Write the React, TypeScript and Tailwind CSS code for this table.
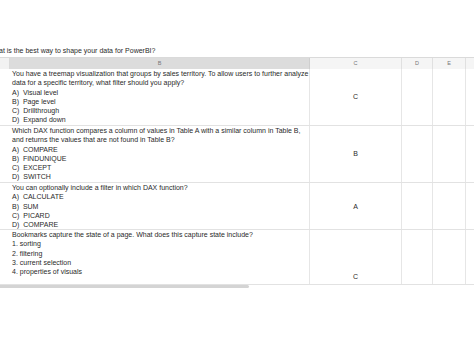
import React from 'react'

const rows = [
  {
    lines: [
      'You have a treemap visualization that groups by sales territory. To allow users to further analyze',
      'data for a specific territory, what filter should you apply?',
      'A)  Visual level',
      'B)  Page level',
      'C)  Drillthrough',
      'D)  Expand down',
    ],
    answer: 'C',
    h: 'h-[57px]',
    align: 'items-center',
  },
  {
    lines: [
      'Which DAX function compares a column of values in Table A with a similar column in Table B,',
      'and returns the values that are not found in Table B?',
      'A)  COMPARE',
      'B)  FINDUNIQUE',
      'C)  EXCEPT',
      'D)  SWITCH',
    ],
    answer: 'B',
    h: 'h-[57px]',
    align: 'items-center',
  },
  {
    lines: [
      'You can optionally include a filter in which DAX function?',
      'A)  CALCULATE',
      'B)  SUM',
      'C)  PICARD',
      'D)  COMPARE',
    ],
    answer: 'A',
    h: 'h-[47px]',
    align: 'items-center',
  },
  {
    lines: [
      'Bookmarks capture the state of a page. What does this capture state include?',
      '1. sorting',
      '2. filtering',
      '3. current selection',
      '4. properties of visuals',
    ],
    answer: 'C',
    h: 'h-[55px]',
    align: 'items-end pb-[3px]',
  },
]

const App: React.FC = () => {
  return (
    <div className="w-[474px] h-[355px] bg-white overflow-hidden text-[#2a2a2a] text-[7px] leading-[9.3px] font-['Liberation_Sans',Arial,sans-serif]">
      {/* Question title */}
      <div className="pt-[46px] h-[57px] whitespace-nowrap -ml-[1px]">
        at is the best way to shape your data for PowerBI?
      </div>

      {/* Header */}
      <div className="grid grid-cols-[10px_300px_92px_31px_33px_1fr] h-[12px] border-y border-[#dadada] text-[#777] text-[5.5px] leading-[11px]">
        <div className="bg-[#f2f2f2] border-r border-[#dadada]" />
        <div className="bg-[#dcdcdc] text-center border-r border-[#cfcfcf]">B</div>
        <div className="bg-[#f5f5f5] text-center border-r border-[#e0e0e0]">C</div>
        <div className="bg-[#f5f5f5] text-center border-r border-[#e0e0e0]">D</div>
        <div className="bg-[#f5f5f5] text-center border-r border-[#e0e0e0]">E</div>
        <div className="bg-[#f5f5f5]" />
      </div>

      {/* Rows */}
      {rows.map((row, i) => (
        <div
          key={i}
          className={`grid grid-cols-[10px_300px_92px_31px_33px_1fr] ${row.h} border-b border-[#e2e2e2]`}
        >
          <div />
          <div className="pl-[2px] whitespace-nowrap border-r border-[#e6e6e6]">
            {row.lines.map((l, j) => (
              <div key={j} className="whitespace-pre">{l}</div>
            ))}
          </div>
          <div className={`flex justify-center ${row.align} border-r border-[#e6e6e6]`}>
            {row.answer}
          </div>
          <div className="border-r border-[#e6e6e6]" />
          <div className="border-r border-[#e6e6e6]" />
          <div />
        </div>
      ))}

      {/* Horizontal scrollbar */}
      <div className="w-[249px] h-[3px] bg-[#d4d4d4] rounded-r-sm" />
    </div>
  )
}

export default App
